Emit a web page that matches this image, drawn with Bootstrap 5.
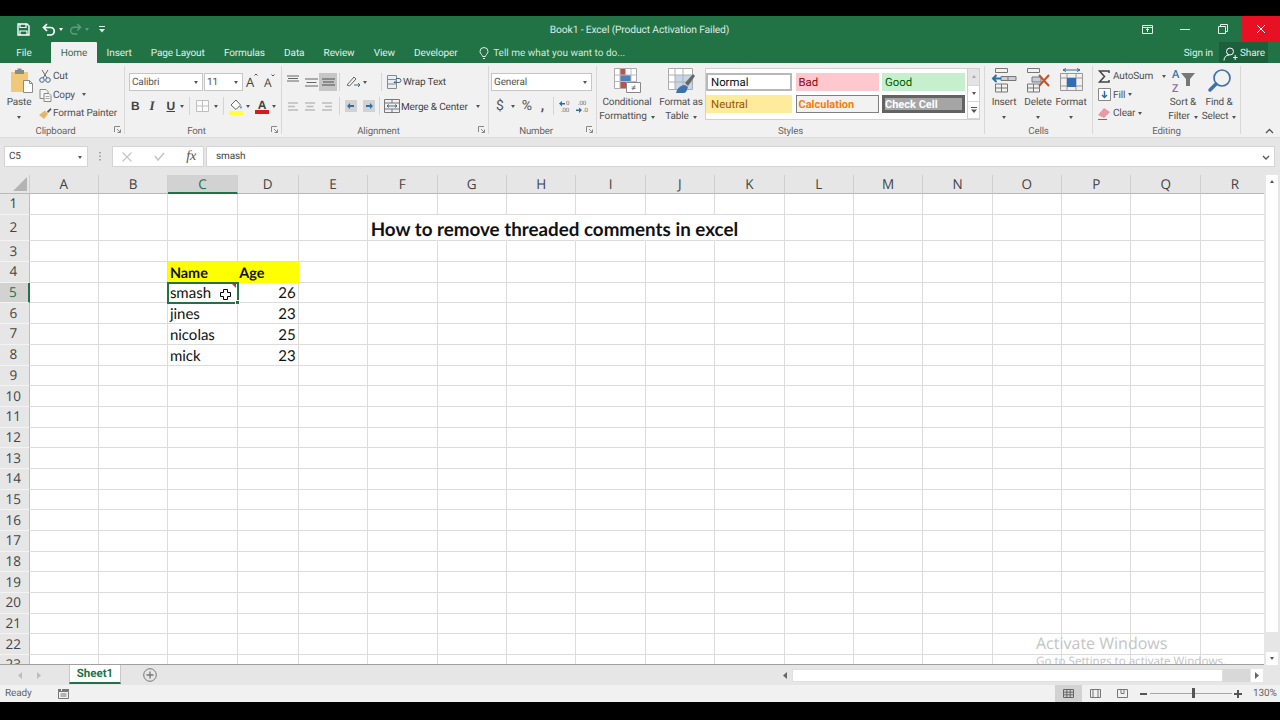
<!DOCTYPE html>
<html lang="en">
<head>
<meta charset="UTF-8">
<title>Book1 - Excel</title>
<link href="https://cdn.jsdelivr.net/npm/bootstrap@5.3.0/dist/css/bootstrap.min.css" rel="stylesheet">
<style>
html, body { width: 1280px; height: 720px; overflow: hidden; background: #000; }
body { font-family: Roboto, "Open Sans", sans-serif; font-size: 10px; letter-spacing: -.15px; color: #444; line-height: 14px; text-rendering: geometricPrecision; }
svg { display: block; flex: none; overflow: visible; }
.app { margin-top: 16px; height: 686px; background: #f1f1f1; }

/* title + tabs */
.title-row { height: 26px; background: #217346; color: #dcebe3; display: grid; grid-template-columns: 1fr auto 1fr; align-items: center; }
.qat { padding-left: 17px; }
.title-text { padding: 1px 1px 0 0; font-size: 10.3px; }
.win-btns { justify-content: flex-end; }
.win-btn { width: 38px; height: 26px; }
.win-btn.close { width: 38px; background: #e81123; }
.tabs { height: 21px; background: #217346; color: #e2eee8; padding-left: 7px; letter-spacing: -.1px; }
.tab { padding: 0 9.6px; height: 21px; line-height: 23px; }
.tab.first { margin-right: 10px; padding: 0; width: 34px; text-align: center; }
.tab.active { background: #f1f1f1; color: #3a6b52; padding: 0; width: 46px; text-align: center; border-radius: 1px 1px 0 0; margin-right: 0; }
.tell { margin-left: 12px; gap: 4px; color: #d6e7de; padding-top: 2px; letter-spacing: 0; }
.signin { padding-top: 3px; }
.share { background: #1c5f3b; height: 21px; width: 49px; margin: 0 12px 0 6px; gap: 2px; padding: 2px 0 0 4px; }

/* ribbon */
.ribbon { height: 74px; padding-top: 3px; background: #f1f1f1; color: #505050; }
.rg { height: 68px; flex: none; border-right: 1px solid #d8d8d8; position: relative; }
.rg-body { height: 58px; }
.rg-label { height: 10px; line-height: 15px; text-align: center; color: #666; font-size: 9.7px; }
.rg-label.has-launcher { padding-right: 13px; }
.launcher { position: absolute; right: 3px; bottom: 1px; }
.w-clip { width: 125px; } .w-font { width: 157px; } .w-align { width: 207px; }
.w-num { width: 108px; } .w-styles { width: 388px; } .w-cells { width: 108px; } .w-edit { width: 148px; }
.big { display: flex; flex-direction: column; align-items: center; padding-top: 2px; text-align: center; flex: none; white-space: nowrap; }
.big .ico { height: 29px; }
.caret { display: inline-block; width: 0; height: 0; border: 2.5px solid transparent; border-top: 3px solid #555; border-bottom: 0; vertical-align: middle; flex: none; }
.small-col { width: 86px; padding-top: 1px; }
.small-col.edit-col { width: 70px; margin-left: 4px; }
.small-row { height: 18.5px; align-items: center; gap: 1px; white-space: nowrap; }
.small-row > span:not(.small-ico):not(.caret) { padding-top: 2px; }
.small-ico { width: 14px; display: flex; justify-content: center; flex: none; }
.rows { padding-top: 7px; }
.r1 { height: 18px; margin-bottom: 6px; align-items: center; }
.r2 { height: 18px; align-items: center; }
.pick { height: 18px; background: #fff; border: 1px solid #c6c6c6; display: flex; align-items: center; justify-content: space-between; padding: 1px 4px 0 2px; flex: none; color: #555; }
.sep { width: 1px; height: 18px; background: #d4d4d4; flex: none; }
.lbl { color: #444; padding-top: 2px; }
.r2 .lbl { padding-top: 3px; }
.bold-t { font: bold 12px "Liberation Sans", sans-serif; color: #444; }
.ital-t { font: italic bold 13px "Liberation Serif", serif; color: #444; }
.under-t { font: bold 12px "Liberation Sans", sans-serif; color: #444; text-decoration: underline; }
.grow-a { font: 13px "Open Sans", sans-serif; color: #444; width: 13px; }
.act { background: #c6c6c6; width: 18px; height: 18px; display: flex; align-items: center; justify-content: center; }
.num-t { font-size: 14px; color: #555; }
.m1 { margin-left: 1px; } .m2 { margin-left: 2px; } .m3 { margin-left: 3px; } .m4 { margin-left: 4px; }
.m5 { margin-left: 5px; } .m6 { margin-left: 6px; } .m7 { margin-left: 7px; } .m8 { margin-left: 8px; } .m9 { margin-left: 9px; } .m10 { margin-left: 10px; } .m11 { margin-left: 11px; } .m12 { margin-left: 12px; } .m14 { margin-left: 14px; } .m26 { margin-left: 26px; }

/* styles gallery */
.gallery { width: 275px; height: 52px; margin-top: 2px; background: #fff; border: 1px solid #d0d0d0; padding-top: 4px; flex: none; }
.gal-cells { width: 261px; display: grid; grid-template-columns: 86px 83px 83px; column-gap: 3.5px; row-gap: 4px; grid-auto-rows: 18px; }
.gs { padding-left: 3px; line-height: 18px; font-size: 11.4px; letter-spacing: normal; }
.gs-normal { background: #fff; border: 2px solid #b8b8b8; color: #111; line-height: 14px; }
.gs-bad { background: #ffc7ce; color: #9c0006; }
.gs-good { background: #c6efce; color: #006100; }
.gs-neutral { background: #ffeb9c; color: #9c5700; padding-left: 5px; }
.gs-calc { background: #f2f2f2; border: 1px solid #7f7f7f; color: #fa7d00; font-weight: 700; line-height: 18px; font-size: 11px; padding-left: 2px; }
.gs-check { background: #a5a5a5; border: 3px solid #636363; color: #fff; font-weight: 700; line-height: 14px; padding-left: 0; font-size: 11px; }
.gal-scroll { width: 12px; margin-left: 1px; margin-top: -4px; border-left: 1px solid #d0d0d0; height: 50px; }
.gal-scroll div { height: 16.6px; display: flex; align-items: center; justify-content: center; border-bottom: 1px solid #d8d8d8; }
.gal-scroll .off { background: #e4e4e4; }
.collapse-btn { align-self: flex-end; margin: 0 0 3px 24px; }

/* formula bar */
.fbar { height: 30px; padding-top: 8px; background: #e6e6e6; border-top: 1px solid #dcdcdc; }
.namebox { width: 84px; height: 21px; margin-left: 4px; background: #fff; border: 1px solid #d4d4d4; padding: 1px 5px 0 4px; color: #444; }
.dots { width: 24px; }
.fx-box { width: 92px; height: 21px; background: #fff; border: 1px solid #d4d4d4; padding: 0 7px 0 9px; justify-content: space-between; }
.fx-t { font: italic 14px "Liberation Serif", serif; color: #555; }
.finput { width: 1069px; height: 21px; margin-left: 2px; background: #fff; border: 1px solid #d4d4d4; padding: 1px 4px 0 9px; color: #444; }

/* sheet */
.sheet-wrap { height: 498px; padding-top: 8px; background: #e6e6e6; }
.sheet-area { height: 490px; }
.sheet { width: 1264px; overflow: hidden; position: relative; background: #fff; border-bottom: 1px solid #a0a0a0; letter-spacing: normal; }
.grid { display: grid; grid-template-columns: 29.6px repeat(3, 69.4px) 61px repeat(14, 69.4px); grid-template-rows: 19px 20.7px 26.7px repeat(21, 20.7px); width: 1270px; }
.c { border-right: 1px solid #dcdcdc; border-bottom: 1px solid #dcdcdc; font-family: Lato, "Open Sans", sans-serif; font-size: 15px; line-height: 17px; color: #111; padding: 0 2px 0 1.500px; white-space: nowrap; min-width: 0; display: flex; align-items: flex-end; }
.ch { background: #e6e6e6; border-bottom: 1px solid #b8b8b8; border-right: 1px solid #cfcfcf; font-family: "Open Sans", sans-serif; font-size: 13.5px; color: #444; justify-content: center; align-items: center; padding: 1px 0 0; }
.rh { background: #e6e6e6; border-bottom: 1px solid #f3f3f3; border-right: 1px solid #bdbdbd; font-family: "Open Sans", sans-serif; font-size: 13.5px; color: #444; justify-content: center; align-items: center; padding: 0 2px 0 0; }
.hl-col { background: #d2d2d2; border-bottom: 2px solid #217346; color: #217346; }
.hl-row { background: #d2d2d2; border-right: 2px solid #217346; color: #217346; }
.corner { position: relative; overflow: hidden; }
.corner svg { position: absolute; right: 2px; bottom: 2px; }
.fill { background: #ffff00; border-color: #ffff00; font-weight: 700; font-size: 14.4px; line-height: 17px; }
.right { justify-content: flex-end; }
.sheet-title { font-weight: 700; font-size: 18.8px; overflow: visible; line-height: 21px; padding-left: 2.500px; }
.spill { border-right-color: transparent; }
.sel { position: relative; z-index: 2; outline: 2px solid #217346; outline-offset: -1px; border-color: transparent; }
.sel .handle { position: absolute; right: -3px; bottom: -3px; background: #217346; border: 1px solid #fff; box-sizing: content-box; width: 3px; height: 3px; }
.sel .tick { position: absolute; right: 1px; top: 1px; width: 0; height: 0; border-top: 4px solid #d13438; border-left: 4px solid transparent; }
.sel svg { position: absolute; left: 52px; top: 6px; }
.watermark { position: absolute; left: 1036px; top: 458px; color: #c4c4c4; font-family: "Open Sans", sans-serif; pointer-events: none; white-space: nowrap; }
.wm1 { font-size: 16px; line-height: 20px; }
.wm2 { font-size: 11.6px; line-height: 17px; }
.vscroll { width: 16px; background: #e6e6e6; padding-left: 2px; }
.sb-btn { width: 12px; height: 13px; background: #fff; display: flex; align-items: center; justify-content: center; flex: none; }
.sb-thumb { width: 12px; height: 444px; background: #fff; margin-bottom: 20px; }

/* sheet tabs */
.tabbar { height: 20px; background: #e6e6e6; }
.tab-nav { width: 69px; padding-left: 18px; gap: 15px; height: 20px; align-items: center; }
.sheet-tab { width: 52px; height: 19px; background: #fff; border-bottom: 2px solid #217346; color: #217346; font-weight: 700; text-align: center; font-size: 11.5px; letter-spacing: normal; line-height: 16px; border-left: 1px solid #c8c8c8; border-right: 1px solid #c8c8c8; }
.add-sheet { margin-left: 22px; }
.hscroll { margin-left: auto; margin-right: 17px; width: 480px; height: 13px; }
.h-thumb { width: 431px; height: 13px; background: #fff; border: 1px solid #e0e0e0; margin-left: 5px; }
.h-track { width: 27px; height: 13px; background: #d8d8d8; }

/* status bar */
.status { height: 17px; background: #f1f1f1; color: #666; padding: 0 5px; }
.ready { padding-top: 1px; }
.view-btn { width: 27px; height: 17px; display: flex; align-items: center; justify-content: center; }
.view-btn.on { background: #d2d2d2; }
.slider { width: 82px; height: 1px; background: #a8a8a8; position: relative; }
.slider span { position: absolute; left: 42px; top: -5px; width: 3px; height: 10px; background: #555; }
.zoom-pct { width: 22px; }
</style>
</head>
<body>
<div class="app d-flex flex-column">

  <div class="title-row">
    <div class="qat d-flex align-items-center">
      <svg width="13" height="13" viewBox="0 0 13 13" fill="none" stroke="#fff" stroke-width="1.4"><path d="M1 1h9l2 2v9H1z"/><path d="M3 1v3.5h6V1" stroke-width="1.2"/><path d="M3 12V8h7v4" stroke-width="1.2"/></svg>
      <svg class="m12" width="14" height="13" viewBox="0 0 14 13" fill="none" stroke="#fff" stroke-width="1.7"><path d="M5 1 1.5 4.5 5 8M2 4.5h6.500a3.700 3.700 0 0 1 0 7.500H5"/></svg>
      <span class="caret m3" style="border-top-color:#fff"></span>
      <svg class="m6" width="13" height="12" viewBox="0 0 14 13" fill="none" stroke="#5f9c7e" stroke-width="1.6"><path d="M9 1l3.500 3.500L9 8M12 4.500H5.500a3.700 3.700 0 0 0 0 7.500H9"/></svg>
      <span class="caret m3" style="border-top-color:#5f9c7e"></span>
      <svg class="m10" width="6" height="7" viewBox="0 0 6 7" fill="#dfeee6"><path d="M0 0h6v1H0zM0 3h6L3 6.500z"/></svg>
    </div>
    <div class="title-text">Book1 - Excel (Product Activation Failed)</div>
    <div class="win-btns d-flex align-items-center">
      <div class="win-btn d-flex align-items-center justify-content-center"><svg width="11" height="9" viewBox="0 0 11 9" fill="none" stroke="#e6f0eb"><path d="M.5.500h10v8H.500zM.5 2.500h10M5.500 7V3.500M4 5l1.500-1.500L7 5"/></svg></div>
      <div class="win-btn d-flex align-items-center justify-content-center"><svg width="10" height="1" viewBox="0 0 10 1"><path d="M0 0h10v1H0z" fill="#e6f0eb"/></svg></div>
      <div class="win-btn d-flex align-items-center justify-content-center"><svg width="10" height="10" viewBox="0 0 10 10" fill="none" stroke="#e6f0eb"><path d="M2.500 2.500V.5h7v7h-2M.5 2.500h7v7h-7z"/></svg></div>
      <div class="win-btn close d-flex align-items-center justify-content-center"><svg width="10" height="10" viewBox="0 0 10 10" stroke="#fff"><path d="M1 1l8 8M9 1 1 9"/></svg></div>
    </div>
  </div>

  <div class="tabs d-flex">
    <div class="tab first">File</div>
    <div class="tab active">Home</div>
    <div class="tab">Insert</div>
    <div class="tab">Page Layout</div>
    <div class="tab">Formulas</div>
    <div class="tab">Data</div>
    <div class="tab">Review</div>
    <div class="tab">View</div>
    <div class="tab">Developer</div>
    <div class="tell d-flex align-items-center">
      <svg width="10" height="13" viewBox="0 0 10 13" fill="none" stroke="#dfeee6"><path d="M3.500 9.500C3.500 7.500 1 7 1 4.500a4 4 0 0 1 8 0C9 7 6.500 7.500 6.500 9.500zM4 11.500h2"/></svg>
      <span>Tell me what you want to do...</span>
    </div>
    <div class="signin ms-auto d-flex align-items-center">Sign in</div>
    <div class="share d-flex align-items-center">
      <svg width="15" height="14" viewBox="0 0 15 14" fill="none" stroke="#fff"><circle cx="7" cy="4.500" r="3.500"/><path d="M1 13.500c0-3 2-5.500 5-5.500M10 10.500h4.500M12.200 8v5"/></svg>
      <span>Share</span>
    </div>
  </div>

  <div class="ribbon d-flex">
    <!-- Clipboard -->
    <div class="rg w-clip">
      <div class="rg-body d-flex">
        <div class="big" style="width:38px">
          <div class="ico">
            <svg width="27" height="27" viewBox="0 0 27 27"><path d="M5 4h17v20H5z" fill="#f1c77a"/><path d="M9 2h9v4H9z" fill="#8a8a8a"/><path d="M11.500 .5h4v2h-4z" fill="#8a8a8a"/><path d="M17.500 12.500h6l3 3V24.500h-9z" fill="#fff" stroke="#8a8a8a"/><path d="M23.500 12.500v3h3" fill="none" stroke="#8a8a8a"/></svg>
          </div>
          <div>Paste</div>
          <div style="height:14px" class="d-flex align-items-center"><span class="caret"></span></div>
        </div>
        <div class="small-col">
          <div class="small-row d-flex"><span class="small-ico"><svg width="12" height="14" viewBox="0 0 12 14" fill="none" stroke="#44698a"><path d="M3 1l5 8M9 1 4 9" stroke="#666"/><circle cx="3" cy="11" r="2.300"/><circle cx="9" cy="11" r="2.300"/></svg></span><span>Cut</span></div>
          <div class="small-row d-flex"><span class="small-ico"><svg width="13" height="14" viewBox="0 0 13 14" fill="#f6f6f6" stroke="#8a8a8a"><path d="M1 1.500h6l2 2v7H1z"/><path d="M5 5.500h5l2 2v6H5z"/><path d="M6.500 8.500h4M6.500 10.500h4" stroke="#aaa"/></svg></span><span>Copy</span><span class="caret m6"></span></div>
          <div class="small-row d-flex"><span class="small-ico"><svg width="14" height="13" viewBox="0 0 14 13"><path d="M1 8 7 3.500l3 3.500-4 5z" fill="#e5b76a"/><path d="M9 4.500 12.500 1l1 1.500L10 6z" fill="#555"/></svg></span><span>Format Painter</span></div>
        </div>
      </div>
      <div class="rg-label has-launcher">Clipboard</div>
      <svg class="launcher" width="7" height="7" viewBox="0 0 7 7" fill="none" stroke="#888"><path d="M.5 6V.5H6M3 3l3.500 3.500M6.500 3.500v3h-3"/></svg>
    </div>

    <!-- Font -->
    <div class="rg w-font">
      <div class="rg-body rows" style="padding-left:4px">
        <div class="r1 d-flex">
          <div class="pick" style="width:74px"><span>Calibri</span><span class="caret"></span></div>
          <div class="pick m1" style="width:39px"><span>11</span><span class="caret"></span></div>
          <span class="grow-a m3 d-flex"><span>A</span><svg width="4" height="3" viewBox="0 0 4 3" fill="none" stroke="#555"><path d="M.5 2.500 2 1l1.500 1.500"/></svg></span>
          <span class="grow-a m5 d-flex" style="font-size:12px"><span>A</span><svg width="4" height="3" viewBox="0 0 4 3" fill="none" stroke="#555"><path d="M.5.500 2 2 3.500.500"/></svg></span>
        </div>
        <div class="r2 d-flex">
          <span class="bold-t m2">B</span>
          <span class="ital-t m10">I</span>
          <span class="under-t m12">U</span>
          <span class="caret m5"></span>
          <span class="sep m5"></span>
          <svg class="m6" width="13" height="12" viewBox="0 0 13 12" fill="#fafafa" stroke="#bfbfbf"><path d="M.5.500h12v11H.5zM6.500.500v11M.5 6h12"/></svg>
          <span class="caret m5"></span>
          <span class="sep m5"></span>
          <svg class="m5" width="14" height="17" viewBox="0 0 14 17"><path d="M2 7 7 2l4.500 5L7 11.500z" fill="#fff" stroke="#666"/><path d="M10 8.500c1 1 2 2 2 3 0-1 1-2 1-3z" fill="#4a90c8"/><path d="M0 13h14v4H0z" fill="#ffff3a"/></svg>
          <span class="caret m3"></span>
          <svg class="m5" width="14" height="16" viewBox="0 0 14 16"><text x="7" y="10.500" text-anchor="middle" font-family="Liberation Sans" font-weight="700" font-size="12" fill="#444">A</text><path d="M0 12h14v4H0z" fill="#d01c1c"/></svg>
          <span class="caret m3"></span>
        </div>
      </div>
      <div class="rg-label has-launcher">Font</div>
      <svg class="launcher" width="7" height="7" viewBox="0 0 7 7" fill="none" stroke="#888"><path d="M.5 6V.5H6M3 3l3.500 3.500M6.500 3.500v3h-3"/></svg>
    </div>

    <!-- Alignment -->
    <div class="rg w-align">
      <div class="rg-body rows" style="padding-left:5px">
        <div class="r1 d-flex">
          <svg width="12" height="7" viewBox="0 0 12 7" stroke="#666" style="margin-bottom:8px"><path d="M0 1h12M1 3.500h10M0 6h12"/></svg>
          <svg class="m6" width="13" height="9" viewBox="0 0 13 9" stroke="#666"><path d="M0 1h13M1.500 4.500h10M0 8h13"/></svg>
          <span class="act m1"><svg width="13" height="10" viewBox="0 0 13 10" stroke="#777"><path d="M0 2h13M1 5h11M0 8h13" stroke-width="1.500"/></svg></span>
          <span class="sep m2"></span>
          <svg class="m5" width="17" height="13" viewBox="0 0 17 13" fill="none" stroke="#666"><path d="M2 9 9 1M4.500 10 11 3M2 9l2.500 1M9 1l2 2"/><path d="M9 9h6M13 7l2 2-2 2" stroke="#44698a"/></svg>
          <span class="caret m1"></span>
          <span class="sep m14"></span>
          <svg class="m5" width="15" height="14" viewBox="0 0 15 14" fill="none" stroke="#8a8a8a"><path d="M.5.500h9v13h-9zM.5 4.500h9M.5 9h9" fill="#e8eef4"/><path d="M7 7.500h5a2 2 0 0 0 0-4H9M9 5.500 7 7.500" stroke="#44698a"/></svg>
          <span class="lbl m1">Wrap Text</span>
        </div>
        <div class="r2 d-flex">
          <svg class="m1" width="10" height="9" viewBox="0 0 10 9" stroke="#bcbcbc" stroke-width="1.600"><path d="M0 1h10M0 4.500h7M0 8h10"/></svg>
          <svg class="m7" width="10" height="9" viewBox="0 0 10 9" stroke="#bcbcbc" stroke-width="1.600"><path d="M0 1h10M1.500 4.500h7M0 8h10"/></svg>
          <svg class="m7" width="10" height="9" viewBox="0 0 10 9" stroke="#bcbcbc" stroke-width="1.600"><path d="M0 1h10M3 4.500h7M0 8h10"/></svg>
          <span class="sep m7"></span>
          <svg class="m5" width="12" height="12" viewBox="0 0 12 12"><path d="M0 0h12v12H0z" fill="#d2d2d2"/><path d="M2 6l3-3v2h4v2H5v2z" fill="#2a6fa8"/></svg>
          <svg class="m6" width="12" height="12" viewBox="0 0 12 12"><path d="M0 0h12v12H0z" fill="#d2d2d2"/><path d="M10 6 7 3v2H3v2h4v2z" fill="#2a6fa8"/></svg>
          <span class="sep m4"></span>
          <svg class="m4" width="16" height="14" viewBox="0 0 16 14" fill="none" stroke="#777"><path d="M.5.500h15v13H.5zM.5 4h15M.5 10h15M8 .5V4M8 10v3.500"/><path d="M3 7h10M3 7l2-1.500M3 7l2 1.500M13 7l-2-1.500M13 7l-2 1.500" stroke="#44698a"/></svg>
          <span class="lbl m1">Merge &amp; Center</span>
          <span class="caret m8"></span>
        </div>
      </div>
      <div class="rg-label has-launcher">Alignment</div>
      <svg class="launcher" width="7" height="7" viewBox="0 0 7 7" fill="none" stroke="#888"><path d="M.5 6V.5H6M3 3l3.500 3.500M6.500 3.500v3h-3"/></svg>
    </div>

    <!-- Number -->
    <div class="rg w-num">
      <div class="rg-body rows" style="padding-left:2px">
        <div class="r1 d-flex">
          <div class="pick" style="width:101px"><span>General</span><span class="caret"></span></div>
        </div>
        <div class="r2 d-flex">
          <span class="num-t m5">$</span>
          <span class="caret m7"></span>
          <span class="num-t m7">%</span>
          <span class="num-t fw-bold m9">,</span>
          <span class="sep m9"></span>
          <svg class="m5" width="13" height="13" viewBox="0 0 13 13" font-family="Open Sans" font-size="6"><path d="M0 3.500l3-2.500v2h3v1.500H3v2z" fill="#2a6fa8"/><text x="7" y="5" fill="#555">0</text><text x="2" y="12" fill="#555">.00</text></svg>
          <svg class="m4" width="13" height="13" viewBox="0 0 13 13" font-family="Open Sans" font-size="6"><text x="2" y="5" fill="#555">.00</text><path d="M6 10 3 7.500v2H0V11h3v2z" fill="#2a6fa8"/><text x="7" y="12" fill="#555">.0</text></svg>
        </div>
      </div>
      <div class="rg-label has-launcher">Number</div>
      <svg class="launcher" width="7" height="7" viewBox="0 0 7 7" fill="none" stroke="#888"><path d="M.5 6V.5H6M3 3l3.500 3.500M6.500 3.500v3h-3"/></svg>
    </div>

    <!-- Styles -->
    <div class="rg w-styles">
      <div class="rg-body d-flex">
        <div class="big m2" style="width:56px">
          <div class="ico">
            <svg width="27" height="25" viewBox="0 0 27 25"><path d="M.5.500h22v20H.5z" fill="#fff" stroke="#aaa"/><path d="M6 1h5.500v6H6z" fill="#c0504d"/><path d="M6 7h11v6H6z" fill="#4f81bd"/><path d="M6 13h6v7H6z" fill="#c0504d"/><path d="M.5 7h22M.5 13.500h22M6 1v20M17 1v20" stroke="#bbb" fill="none"/><path d="M12.500 14.500h14v10h-14z" fill="#fff" stroke="#888"/><text x="19.500" y="23" text-anchor="middle" font-size="9" fill="#444" font-family="Open Sans">≠</text></svg>
          </div>
          <div>Conditional</div>
          <div class="d-flex align-items-center gap-1">Formatting <span class="caret"></span></div>
        </div>
        <div class="big m2" style="width:48px">
          <div class="ico">
            <svg width="27" height="25" viewBox="0 0 27 25"><path d="M.5.500h24v21H.5z" fill="#fff" stroke="#aaa"/><path d="M7 7h17v14H7z" fill="#c5d6e8"/><path d="M.5 7h24M.5 14h24M7 1v20M15 1v20" stroke="#b0b0b0" fill="none"/><path d="M17 15l8-9 2 2-7 10z" fill="#666"/><path d="M8 25c1-5 5-8 9-8l3 2c-1 3-2 6-4 6z" fill="#3f73a8"/></svg>
          </div>
          <div>Format as</div>
          <div class="d-flex align-items-center gap-1">Table <span class="caret"></span></div>
        </div>
        <div class="gallery d-flex">
          <div class="gal-cells">
            <div class="gs gs-normal">Normal</div>
            <div class="gs gs-bad">Bad</div>
            <div class="gs gs-good">Good</div>
            <div class="gs gs-neutral">Neutral</div>
            <div class="gs gs-calc">Calculation</div>
            <div class="gs gs-check">Check Cell</div>
          </div>
          <div class="gal-scroll">
            <div class="off"><span class="caret" style="transform:rotate(180deg);border-top-color:#aaa"></span></div>
            <div><span class="caret"></span></div>
            <div><svg width="6" height="6" viewBox="0 0 6 6" fill="#555"><path d="M0 0h6v1H0zM0 2.500h6L3 6z"/></svg></div>
          </div>
        </div>
      </div>
      <div class="rg-label">Styles</div>
    </div>

    <!-- Cells -->
    <div class="rg w-cells">
      <div class="rg-body d-flex">
        <div class="big m1" style="width:36px">
          <div class="ico">
            <svg width="25" height="25" viewBox="0 0 25 25" fill="none" stroke="#777"><path d="M3.500.500h12v4h-12zM3.500 16h12v8h-12zM9.500 16v8M3.500 20h12"/><path d="M9 8.500h15v4H9zM16 8.500v4" fill="#c5d0dc"/><path d="M1 10.500h8M4.500 7 1 10.500 4.500 14" stroke="#2a6fa8" stroke-width="2"/></svg>
          </div>
          <div>Insert</div>
          <div style="height:14px" class="d-flex align-items-center"><span class="caret"></span></div>
        </div>
        <div class="big" style="width:32px">
          <div class="ico">
            <svg width="25" height="25" viewBox="0 0 25 25" fill="none" stroke="#777"><path d="M1.500.500h12v4h-12zM1.500 16h12v8h-12zM7.500 16v8M1.500 20h12"/><path d="M6 9h9v5H6z" fill="#c5d0dc"/><path d="M13 7l10 11M23 7 13 18" stroke="#c8502a" stroke-width="2"/></svg>
          </div>
          <div>Delete</div>
          <div style="height:14px" class="d-flex align-items-center"><span class="caret"></span></div>
        </div>
        <div class="big" style="width:34px">
          <div class="ico">
            <svg width="25" height="25" viewBox="0 0 25 25" fill="none" stroke="#999"><path d="M1.500 5.500h22v17h-22zM1.500 10h22M1.500 18h22M8 5.500v17M17 5.500v17"/><path d="M8 10h9v9H8z" fill="#2f6fb5" stroke="none"/><path d="M4 2h17M4 2l3-1.500M4 2l3 1.500M21 2l-3-1.500M21 2l-3 1.500" stroke="#2a6fa8"/></svg>
          </div>
          <div>Format</div>
          <div style="height:14px" class="d-flex align-items-center"><span class="caret"></span></div>
        </div>
      </div>
      <div class="rg-label">Cells</div>
    </div>

    <!-- Editing -->
    <div class="rg w-edit">
      <div class="rg-body d-flex">
        <div class="small-col edit-col">
          <div class="small-row d-flex"><span class="small-ico"><svg width="12" height="13" viewBox="0 0 12 13" fill="none" stroke="#444" stroke-width="1.500"><path d="M11 3V1H1.500L6.500 6.500 1.500 12H11v-2"/></svg></span><span class="m1">AutoSum</span><span class="caret m8"></span></div>
          <div class="small-row d-flex"><span class="small-ico"><svg width="13" height="13" viewBox="0 0 13 13"><path d="M.5.500h12v12H.5z" fill="#fff" stroke="#888"/><path d="M6.500 3v6M4 7l2.500 2.500L9 7" fill="none" stroke="#2a6fa8" stroke-width="1.500"/></svg></span><span class="m1">Fill</span><span class="caret m2"></span></div>
          <div class="small-row d-flex"><span class="small-ico"><svg width="14" height="13" viewBox="0 0 14 13"><path d="M1 8l6-7 6 4-6 6z" fill="#e79aa5"/><path d="M1 12.500h9" stroke="#c8502a"/></svg></span><span class="m1">Clear</span><span class="caret m2"></span></div>
        </div>
        <div class="big" style="width:32px">
          <div class="ico">
            <svg width="25" height="25" viewBox="0 0 25 25" font-family="Open Sans" font-weight="600" font-size="11"><text x="1" y="10" fill="#3f73a8">A</text><text x="1" y="24" fill="#8a6aa8">Z</text><path d="M10 5h14l-5 6v7h-4v-7z" fill="#777"/></svg>
          </div>
          <div>Sort &amp;</div>
          <div class="d-flex align-items-center gap-1">Filter <span class="caret"></span></div>
        </div>
        <div class="big m2" style="width:36px">
          <div class="ico">
            <svg width="25" height="25" viewBox="0 0 25 25" fill="none"><circle cx="15" cy="10" r="8" stroke="#3f73a8" stroke-width="1.700"/><path d="M9 16l-6 6" stroke="#3f73a8" stroke-width="3.500" stroke-linecap="round"/></svg>
          </div>
          <div>Find &amp;</div>
          <div class="d-flex align-items-center gap-1">Select <span class="caret"></span></div>
        </div>
      </div>
      <div class="rg-label">Editing</div>
    </div>

    <div class="collapse-btn"><svg width="9" height="6" viewBox="0 0 9 6" fill="none" stroke="#555" stroke-width="1.300"><path d="M1 5l3.500-3.500L8 5"/></svg></div>
  </div>

  <div class="fbar d-flex">
    <div class="namebox d-flex align-items-center justify-content-between"><span>C5</span><span class="caret"></span></div>
    <div class="dots d-flex align-items-center justify-content-center"><svg width="2" height="9" viewBox="0 0 2 9" fill="#aaa"><path d="M0 0h2v1.500H0zM0 3.500h2V5H0zM0 7h2v1.500H0z"/></svg></div>
    <div class="fx-box d-flex align-items-center">
      <svg width="10" height="10" viewBox="0 0 10 10" stroke="#c4c4c4" stroke-width="1.200"><path d="M.5.500l9 9M9.500.5l-9 9"/></svg>
      <svg width="11" height="9" viewBox="0 0 11 9" fill="none" stroke="#c4c4c4" stroke-width="1.500"><path d="M1 4l3 4 6-7"/></svg>
      <span class="fx-t">fx</span>
    </div>
    <div class="finput d-flex align-items-center justify-content-between"><span>smash</span><svg width="8" height="5" viewBox="0 0 8 5" fill="none" stroke="#555" stroke-width="1.300"><path d="M1 1l3 3 3-3"/></svg></div>
  </div>

  <div class="sheet-wrap">
    <div class="sheet-area d-flex">
      <div class="sheet">
        <div class="grid" id="grid"></div>
        <div class="watermark">
          <div class="wm1">Activate Windows</div>
          <div class="wm2">Go to Settings to activate Windows.</div>
        </div>
      </div>
      <div class="vscroll d-flex flex-column">
        <div class="sb-btn"><span class="caret" style="transform:rotate(180deg)"></span></div>
        <div class="sb-thumb"></div>
        <div class="sb-btn"><span class="caret"></span></div>
      </div>
    </div>
  </div>

  <div class="tabbar d-flex">
    <div class="tab-nav d-flex">
      <svg width="4" height="7" viewBox="0 0 4 7" fill="#bdbdbd"><path d="M4 0v7L0 3.500z"/></svg>
      <svg width="4" height="7" viewBox="0 0 4 7" fill="#bdbdbd"><path d="M0 0v7l4-3.500z"/></svg>
    </div>
    <div class="sheet-tab">Sheet1</div>
    <div class="add-sheet d-flex align-items-center"><svg width="14" height="14" viewBox="0 0 14 14" fill="none" stroke="#777"><circle cx="7" cy="7" r="6.300"/><path d="M7 3.500v7M3.500 7h7" stroke-width="1.300"/></svg></div>
    <div class="hscroll d-flex align-items-center align-self-center">
      <svg width="4" height="7" viewBox="0 0 4 7" fill="#666"><path d="M4 0v7L0 3.500z"/></svg>
      <div class="h-thumb"></div>
      <div class="h-track"></div>
      <div class="sb-btn m1"><svg width="4" height="7" viewBox="0 0 4 7" fill="#666"><path d="M0 0v7l4-3.500z"/></svg></div>
    </div>
  </div>

  <div class="status d-flex align-items-center">
    <span class="ready">Ready</span>
    <svg class="m26" width="11" height="10" viewBox="0 0 11 10" fill="none" stroke="#777"><path d="M.5 2.500h10v7H.5zM2.500 5h6M2.500 7h6"/><path d="M0 0h3v2.500H0zM4 0h7v2H4z" fill="#777" stroke="none"/></svg>
    <div class="ms-auto d-flex align-items-center">
      <div class="view-btn on"><svg width="11" height="9" viewBox="0 0 11 9" fill="none" stroke="#666"><path d="M.5.500h10v8H.5zM.5 3.200h10M.5 5.800h10M3.800.5v8M7.200.5v8"/></svg></div>
      <div class="view-btn"><svg width="11" height="9" viewBox="0 0 11 9" fill="none" stroke="#777"><path d="M.5.500h10v8H.5zM3 .5v8M8 .5v8"/></svg></div>
      <div class="view-btn"><svg width="11" height="9" viewBox="0 0 11 9" fill="none" stroke="#777"><path d="M.5.500h10v8H.5zM4 .5v4h3V.5"/></svg></div>
      <svg class="m4" width="7" height="2" viewBox="0 0 7 2"><path d="M0 0h7v2H0z" fill="#555"/></svg>
      <div class="slider m3"><span></span></div>
      <svg class="m2" width="8" height="8" viewBox="0 0 8 8"><path d="M3 0h2v3h3v2H5v3H3V5H0V3h3z" fill="#555"/></svg>
      <span class="zoom-pct m11 ready">130%</span>
    </div>
  </div>
</div>

<script src="https://cdn.jsdelivr.net/npm/bootstrap@5.3.0/dist/js/bootstrap.bundle.min.js"></script>
<script>
  // sheet contents: everything else is an empty cell
  const cols = "ABCDEFGHIJKLMNOPQR".split("");
  const cells = {
    F2: { text: "How to remove threaded comments in excel", cls: "sheet-title spill" },
    G2: { cls: "spill" }, H2: { cls: "spill" }, I2: { cls: "spill" }, J2: { cls: "spill" },
    C4: { text: "Name", cls: "fill" }, D4: { text: "Age", cls: "fill" },
    C5: { text: "smash", cls: "sel" }, D5: { text: "26", cls: "right" },
    C6: { text: "jines" }, D6: { text: "23", cls: "right" },
    C7: { text: "nicolas" }, D7: { text: "25", cls: "right" },
    C8: { text: "mick" }, D8: { text: "23", cls: "right" }
  };
  const cursor = '<span class="tick"></span><span class="handle"></span>' +
    '<svg width="11" height="11" viewBox="0 0 11 11"><path d="M3.500.5h4v3h3v4h-3v3h-4v-3h-3v-4h3z" fill="#fff" stroke="#000"/></svg>';

  let html = '<div class="c ch corner"><svg width="14" height="14" viewBox="0 0 14 14"><path d="M14 0v14H0z" fill="#b4b4b4"/></svg></div>';
  cols.forEach(c => { html += `<div class="c ch${c === "C" ? " hl-col" : ""}">${c}</div>`; });
  for (let r = 1; r <= 23; r++) {
    html += `<div class="c rh${r === 5 ? " hl-row" : ""}">${r}</div>`;
    cols.forEach(c => {
      const cell = cells[c + r] || {};
      const extra = c + r === "C5" ? cursor : "";
      html += `<div class="c ${cell.cls || ""}"><span>${cell.text || ""}</span>${extra}</div>`;
    });
  }
  document.getElementById("grid").innerHTML = html;
</script>
</body>
</html>
